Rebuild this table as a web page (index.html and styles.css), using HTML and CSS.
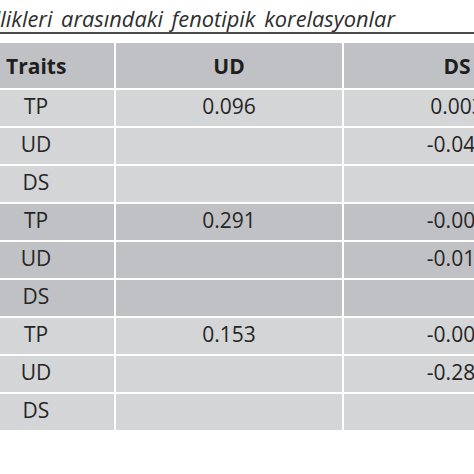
FILE: index.html
```html
<!DOCTYPE html>
<html lang="tr">
<head>
<meta charset="utf-8">
<link rel="stylesheet" href="styles.css">
</head>
<body>
<div class="page">
  <div class="caption"><span class="caption-text">özellikleri arasındaki fenotipik korelasyonlar</span></div>
  <div class="table">
    <div class="cell head first">Traits</div>
    <div class="cell head">UD</div>
    <div class="cell head">DS</div>

    <div class="cell light first">TP</div>
    <div class="cell light">0.096</div>
    <div class="cell light">0.003</div>
    <div class="cell light first">UD</div>
    <div class="cell light"></div>
    <div class="cell light">-0.045</div>
    <div class="cell light first">DS</div>
    <div class="cell light"></div>
    <div class="cell light"></div>

    <div class="cell dark first">TP</div>
    <div class="cell dark">0.291</div>
    <div class="cell dark">-0.002</div>
    <div class="cell dark first">UD</div>
    <div class="cell dark"></div>
    <div class="cell dark">-0.012</div>
    <div class="cell dark first">DS</div>
    <div class="cell dark"></div>
    <div class="cell dark"></div>

    <div class="cell light first">TP</div>
    <div class="cell light">0.153</div>
    <div class="cell light">-0.006</div>
    <div class="cell light first">UD</div>
    <div class="cell light"></div>
    <div class="cell light">-0.283</div>
    <div class="cell light first">DS</div>
    <div class="cell light"></div>
    <div class="cell light"></div>
  </div>
</div>
</body>
</html>
```
FILE: styles.css
```css
html, body {
  margin: 0;
  padding: 0;
  background: #ffffff;
  overflow: hidden;
}
.page {
  width: 474px;
  height: 474px;
  overflow: hidden;
  font-family: "Open Sans", "Noto Sans", sans-serif;
  color: #262626;
}
.caption {
  height: 28px;
  padding-top: 4px;
  border-bottom: 2px solid #4a4a4a;
  overflow: hidden;
  white-space: nowrap;
}
.caption-text {
  display: block;
  font-style: italic;
  font-size: 21.8px;
  line-height: 30px;
  color: #2e2e2e;
  text-indent: -38px;
  word-spacing: 3px;
}
.table {
  margin-top: 9px;
  display: grid;
  grid-template-columns: 114px 226px 226px;
  grid-template-rows: 45px repeat(9, 36px);
  gap: 2px;
  width: 570px;
}
.cell {
  display: flex;
  align-items: center;
  justify-content: center;
  font-size: 21px;
  padding-bottom: 4px;
  box-sizing: border-box;
}
.cell.first {
  padding-right: 42px;
}
.head {
  background: #c0c1c4;
  font-weight: 700;
  padding-bottom: 0;
  color: #1f1f1f;
}
.head.first {
  justify-content: flex-start;
  padding-left: 6px;
  padding-right: 0;
}
.light {
  background: #d4d5d7;
}
.dark {
  background: #c0c1c4;
}
```
